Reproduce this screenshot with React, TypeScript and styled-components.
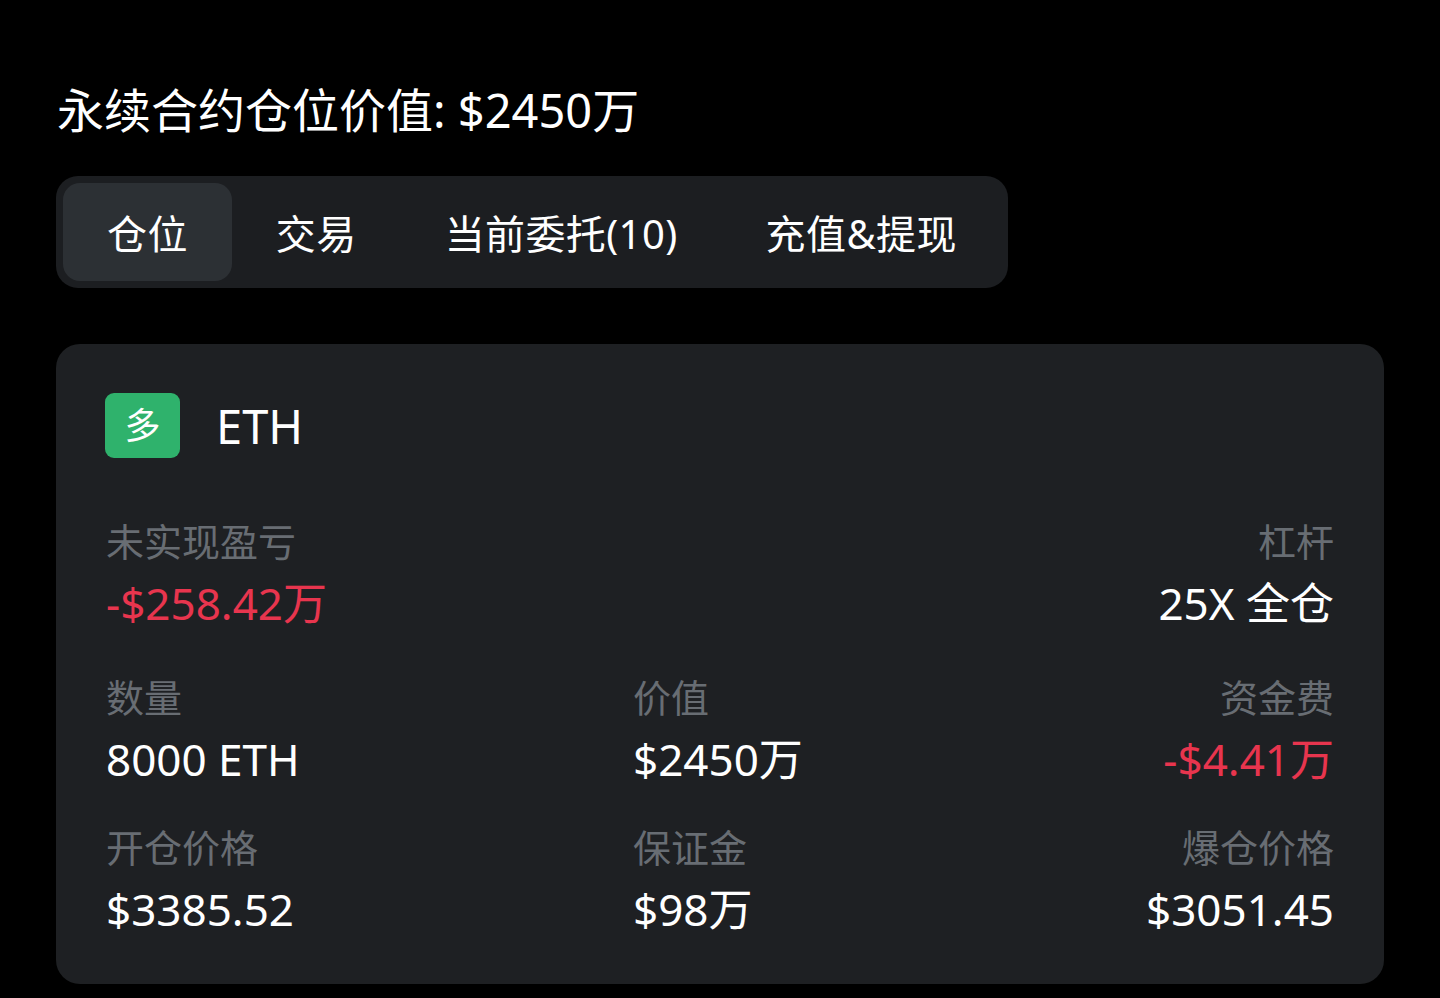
import React from "react";
import styled, { createGlobalStyle } from "styled-components";

const Global = createGlobalStyle`
  html, body { margin: 0; padding: 0; background: #000; }
  body {
    font-family: "Noto Sans", "Noto Sans CJK SC", sans-serif;
    color: #fff;
    -webkit-font-smoothing: antialiased;
  }
`;

const Page = styled.div`
  width: 1440px;
  min-height: 998px;
  box-sizing: border-box;
  padding: 80px 56px 0 56px;
  background: #000;
`;

const Title = styled.h1`
  margin: 0 0 36px 1px;
  font-size: 47px;
  line-height: 60px;
  font-weight: 400;
  color: #fff;
`;

const TabBar = styled.div`
  display: inline-flex;
  box-sizing: border-box;
  height: 112px;
  padding: 7px;
  background: #1c1e21;
  border-radius: 22px;
`;

const Tab = styled.div<{ $active?: boolean }>`
  display: flex;
  align-items: center;
  padding: 0 44px;
  border-radius: 17px;
  font-size: 40px;
  letter-spacing: 0.4px;
  color: #fff;
  background: ${(p) => (p.$active ? "#2c3034" : "transparent")};
  white-space: nowrap;
`;

const Card = styled.section`
  margin-top: 56px;
  width: 1328px;
  box-sizing: border-box;
  padding: 49px 50px 43px 49px;
  background: #1e2023;
  border-radius: 24px;
`;

const Header = styled.div`
  display: flex;
  align-items: center;
  gap: 36px;
  margin-bottom: 57px;
`;

const SideBadge = styled.div`
  width: 75px;
  height: 65px;
  border-radius: 9px;
  background: #2fb26c;
  color: #fff;
  display: flex;
  align-items: center;
  justify-content: center;
  font-size: 36px;
  line-height: 1;
`;

const Symbol = styled.div`
  font-size: 47px;
  line-height: 60px;
  color: #fff;
`;

const TopRow = styled.div`
  display: flex;
  justify-content: space-between;
  margin-bottom: 36px;
  padding-left: 1px;
`;

const Grid = styled.div`
  display: grid;
  grid-template-columns: 527px 1fr auto;
  row-gap: 30px;
  padding-left: 1px;
`;

const Field = styled.div<{ $right?: boolean }>`
  display: flex;
  flex-direction: column;
  gap: 4px;
  align-items: ${(p) => (p.$right ? "flex-end" : "flex-start")};
`;

const Label = styled.div`
  font-size: 38px;
  line-height: 52px;
  color: #686d73;
`;

const Value = styled.div<{ $tone?: "red" | "white" }>`
  font-size: 44px;
  line-height: 64px;
  color: ${(p) => (p.$tone === "red" ? "#e8354e" : "#fff")};
  white-space: nowrap;
`;

type Item = { label: string; value: string; red?: boolean };

const rows: Item[][] = [
  [
    { label: "数量", value: "8000 ETH" },
    { label: "价值", value: "$2450万" },
    { label: "资金费", value: "-$4.41万", red: true },
  ],
  [
    { label: "开仓价格", value: "$3385.52" },
    { label: "保证金", value: "$98万" },
    { label: "爆仓价格", value: "$3051.45" },
  ],
];

const tabs = ["仓位", "交易", "当前委托(10)", "充值&提现"];

export default function App() {
  return (
    <>
      <Global />
      <Page>
        <Title>永续合约仓位价值: $2450万</Title>
        <TabBar>
          {tabs.map((t, i) => (
            <Tab key={t} $active={i === 0}>
              {t}
            </Tab>
          ))}
        </TabBar>
        <Card>
          <Header>
            <SideBadge>多</SideBadge>
            <Symbol>ETH</Symbol>
          </Header>
          <TopRow>
            <Field>
              <Label>未实现盈亏</Label>
              <Value $tone="red">-$258.42万</Value>
            </Field>
            <Field $right>
              <Label>杠杆</Label>
              <Value>25X 全仓</Value>
            </Field>
          </TopRow>
          <Grid>
            {rows.flatMap((row) =>
              row.map((it, i) => (
                <Field key={it.label} $right={i === 2}>
                  <Label>{it.label}</Label>
                  <Value $tone={it.red ? "red" : "white"}>{it.value}</Value>
                </Field>
              ))
            )}
          </Grid>
        </Card>
      </Page>
    </>
  );
}
